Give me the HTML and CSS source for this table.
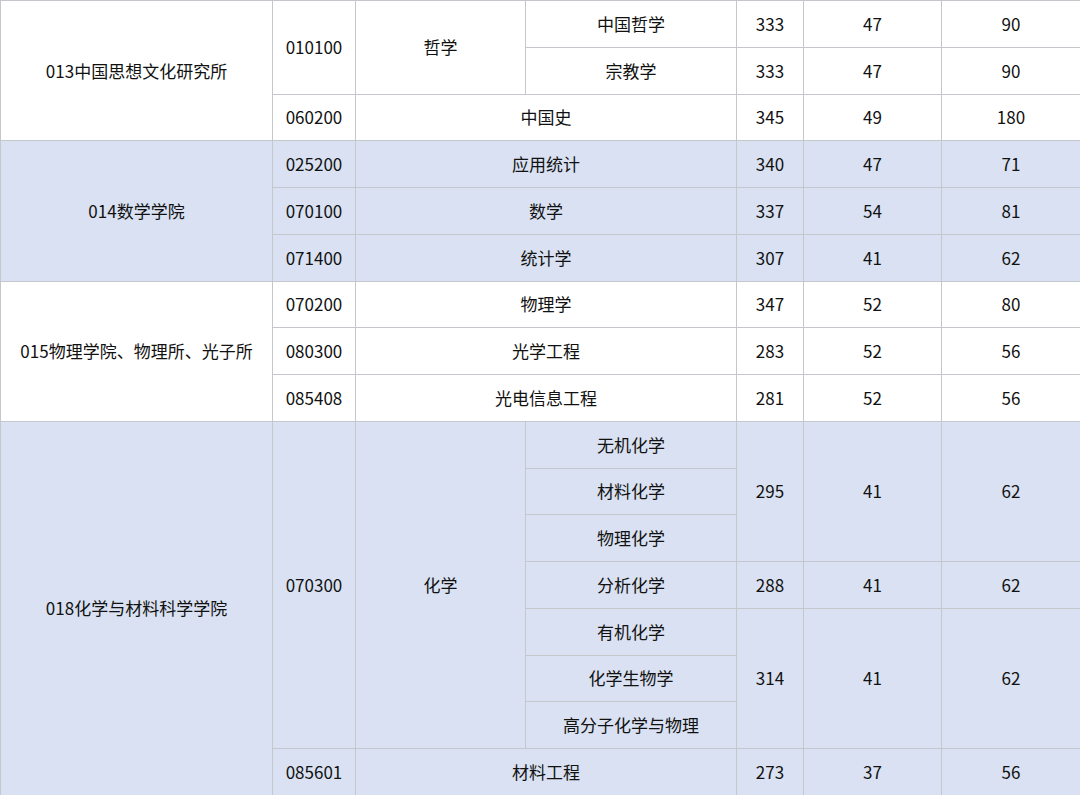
FILE: index.html
```html
<!DOCTYPE html>
<html lang="zh">
<head>
<meta charset="utf-8">
<link rel="stylesheet" href="styles.css">
</head>
<body>
<table class="score-table">
  <colgroup>
    <col class="c-dept"><col class="c-code"><col class="c-major"><col class="c-sub"><col class="c-total"><col class="c-single"><col class="c-other">
  </colgroup>
  <tbody>
    <tr class="white">
      <td rowspan="3">013中国思想文化研究所</td>
      <td rowspan="2">010100</td>
      <td rowspan="2">哲学</td>
      <td>中国哲学</td><td>333</td><td>47</td><td>90</td>
    </tr>
    <tr class="white"><td>宗教学</td><td>333</td><td>47</td><td>90</td></tr>
    <tr class="white"><td>060200</td><td colspan="2">中国史</td><td>345</td><td>49</td><td>180</td></tr>

    <tr class="blue">
      <td rowspan="3">014数学学院</td>
      <td>025200</td><td colspan="2">应用统计</td><td>340</td><td>47</td><td>71</td>
    </tr>
    <tr class="blue"><td>070100</td><td colspan="2">数学</td><td>337</td><td>54</td><td>81</td></tr>
    <tr class="blue"><td>071400</td><td colspan="2">统计学</td><td>307</td><td>41</td><td>62</td></tr>

    <tr class="white">
      <td rowspan="3">015物理学院、物理所、光子所</td>
      <td>070200</td><td colspan="2">物理学</td><td>347</td><td>52</td><td>80</td>
    </tr>
    <tr class="white"><td>080300</td><td colspan="2">光学工程</td><td>283</td><td>52</td><td>56</td></tr>
    <tr class="white"><td>085408</td><td colspan="2">光电信息工程</td><td>281</td><td>52</td><td>56</td></tr>

    <tr class="blue">
      <td rowspan="8">018化学与材料科学学院</td>
      <td rowspan="7">070300</td>
      <td rowspan="7">化学</td>
      <td>无机化学</td>
      <td rowspan="3">295</td><td rowspan="3">41</td><td rowspan="3">62</td>
    </tr>
    <tr class="blue"><td>材料化学</td></tr>
    <tr class="blue"><td>物理化学</td></tr>
    <tr class="blue"><td>分析化学</td><td>288</td><td>41</td><td>62</td></tr>
    <tr class="blue">
      <td>有机化学</td>
      <td rowspan="3">314</td><td rowspan="3">41</td><td rowspan="3">62</td>
    </tr>
    <tr class="blue"><td>化学生物学</td></tr>
    <tr class="blue"><td>高分子化学与物理</td></tr>
    <tr class="blue"><td>085601</td><td colspan="2">材料工程</td><td>273</td><td>37</td><td>56</td></tr>
  </tbody>
</table>
</body>
</html>
```
FILE: styles.css
```css
html, body {
  margin: 0;
  padding: 0;
  background: #ffffff;
}

.score-table {
  width: 1080px;
  height: 795px;
  border-collapse: collapse;
  table-layout: fixed;
  font-family: "Noto Sans CJK SC", "Noto Sans", sans-serif;
  font-size: 17px;
  color: #111111;
}

.c-dept { width: 272px; }
.c-code { width: 83px; }
.c-major { width: 170px; }
.c-sub { width: 211px; }
.c-total { width: 67px; }
.c-single { width: 138px; }
.c-other { width: 139px; }

.score-table td {
  border: 1px solid #c4c7cc;
  padding: 0;
  text-align: center;
  vertical-align: middle;
  line-height: 20px;
  white-space: nowrap;
}

.score-table tr {
  height: 46.76px;
}

.white td {
  background: #ffffff;
}

.blue td {
  background: #d9e1f2;
}
```
